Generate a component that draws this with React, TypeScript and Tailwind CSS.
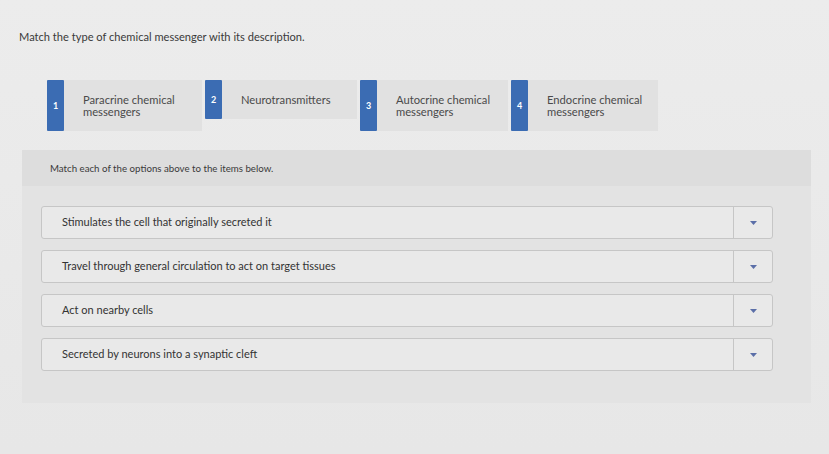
const options = [
  { n: 1, label: 'Paracrine chemical messengers', w: 'w-[155px]', h: 'h-[51px]' },
  { n: 2, label: 'Neurotransmitters', w: 'w-[152px]', h: 'h-[39px]' },
  { n: 3, label: 'Autocrine chemical messengers', w: 'w-[148px]', h: 'h-[51px]' },
  { n: 4, label: 'Endocrine chemical messengers', w: 'w-[147px]', h: 'h-[51px]' },
];

const items = [
  'Stimulates the cell that originally secreted it',
  'Travel through general circulation to act on target tissues',
  'Act on nearby cells',
  'Secreted by neurons into a synaptic cleft',
];

function Caret() {
  return (
    <svg width="7" height="4" viewBox="0 0 7 4" className="fill-[#5b6fa8]">
      <path d="M0 0h7L3.5 4z" />
    </svg>
  );
}

export default function App() {
  return (
    <div
      className="w-[829px] h-[454px] overflow-hidden bg-gradient-to-b from-[#ececec] to-[#e7e7e7] text-[#3a3a3a]"
      style={{ fontFamily: 'Lato, "Open Sans", sans-serif' }}
    >
      {/* Question prompt */}
      <p className="pt-[30px] pl-[19px] text-[11.1px] leading-[14px]">
        Match the type of chemical messenger with its description.
      </p>

      {/* Draggable option cards */}
      <div className="mt-[36px] ml-[47px] flex items-start gap-[3px]">
        {options.map((o) => (
          <div key={o.n} className={`${o.w} ${o.h} flex bg-[#e1e1e1]`}>
            <div className="w-[17px] shrink-0 h-full bg-[#3b6cb3] rounded-[1px] flex items-center justify-center text-white text-[9px] font-bold">
              {o.n}
            </div>
            <div className="pl-[19px] pr-1 flex items-center text-[11.2px] leading-[12px] text-[#4a4a4a]">
              {o.label}
            </div>
          </div>
        ))}
      </div>

      {/* Matching panel */}
      <div className="mt-[19px] ml-[22px] w-[789px] h-[253px] bg-[#e3e3e3]">
        <div className="h-[36px] bg-[#dddddd] pl-[28px] flex items-center text-[9.7px] text-[#3a3a3a]">
          Match each of the options above to the items below.
        </div>
        <div className="pt-[20px] pl-[19px] flex flex-col gap-[11px]">
          {items.map((t) => (
            <div
              key={t}
              className="w-[732px] h-[33px] flex bg-[#e9e9e9] border border-[#c6c6c6] rounded-[3px]"
            >
              <div className="flex-1 pl-[20px] flex items-center text-[11px] text-[#333]">{t}</div>
              <div className="w-[39px] border-l border-[#c6c6c6] flex items-center justify-center">
                <Caret />
              </div>
            </div>
          ))}
        </div>
      </div>
    </div>
  );
}
